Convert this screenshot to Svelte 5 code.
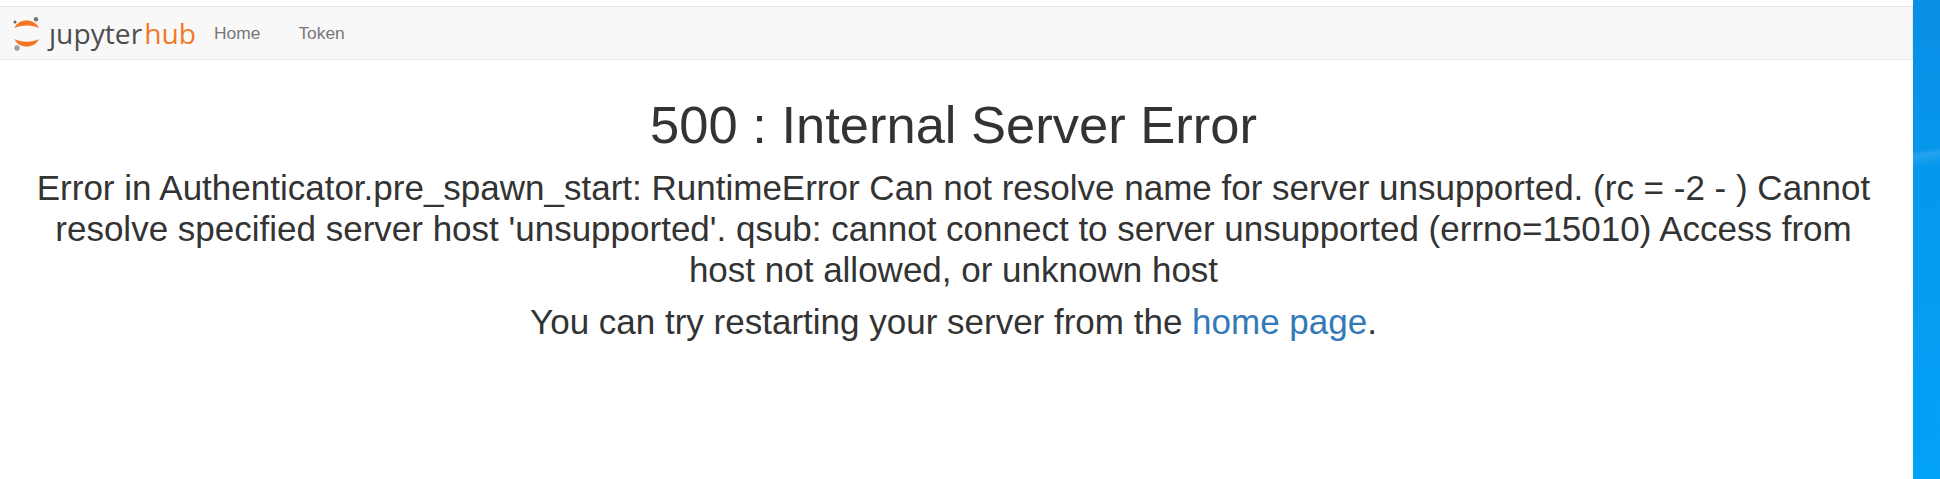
<script>
  let message = "Error in Authenticator.pre_spawn_start: RuntimeError Can not resolve name for server unsupported. (rc = -2 - ) Cannot resolve specified server host 'unsupported'. qsub: cannot connect to server unsupported (errno=15010) Access from host not allowed, or unknown host"
</script>

<div class="screen">
  <div class="page">
    <nav class="navbar">
      <a class="brand" href="#home">
        <svg class="logo" viewBox="0 0 28 36" width="28" height="36">
          <path d="M1.5 13 C5 3 22 3 26 13 C20 9.5 8 9.5 1.5 13 Z" fill="#f37726" />
          <path d="M1.5 24 C5 34 22 34 26 24 C20 27.5 8 27.5 1.5 24 Z" fill="#f37726" />
          <circle cx="23" cy="4.2" r="2.2" fill="#767677" />
          <circle cx="2" cy="7" r="1.5" fill="#616262" />
          <circle cx="4" cy="33" r="2.7" fill="#9e9e9e" />
        </svg>
        <span class="word">ȷupyter<span class="hub">hub</span></span>
      </a>
      <a class="link" href="#home">Home</a>
      <a class="link" href="#token">Token</a>
    </nav>

    <main class="error">
      <h1>500 : Internal Server Error</h1>
      <p>{message}</p>
      <p>You can try restarting your server from the <a href="#home">home page</a>.</p>
    </main>
  </div>
  <div class="desktop"></div>
</div>

<style>
  :global(body) {
    margin: 0;
    background: #fff;
  }

  .screen {
    display: flex;
    height: 479px;
    overflow: hidden;
    font-family: "Liberation Sans", Arial, sans-serif;
  }

  .page {
    flex: 1;
    min-width: 0;
    padding-top: 6px;
  }

  .desktop {
    width: 27px;
    background:
      linear-gradient(172deg, transparent 150px, rgba(255, 255, 255, 0.12) 154px, transparent 166px),
      linear-gradient(180deg, #0a8fe6 0%, #0599ee 40%, #02a2f7 100%);
  }

  .navbar {
    display: flex;
    align-items: center;
    height: 52px;
    background: #f8f8f8;
    border-top: 1px solid #e4e4e4;
    border-bottom: 1px solid #e7e7e7;
    border-right: 1px solid #e7e7e7;
  }

  .brand {
    display: flex;
    align-items: center;
    gap: 8px;
    margin-left: 13px;
    margin-right: 18px;
    text-decoration: none;
  }

  .word {
    font-family: "Open Sans", sans-serif;
    font-size: 28.2px;
    color: #4e4e4e;
    line-height: 1;
  }

  .hub {
    margin-left: 2px;
    color: #f37726;
  }

  .link {
    font-size: 17.4px;
    color: #777;
    text-decoration: none;
    margin-right: 38px;
  }

  .error {
    text-align: center;
    color: #333;
    padding: 0 33px 0 27px;
    margin-top: 36px;
  }

  h1 {
    font-size: 52.5px;
    font-weight: 400;
    line-height: 1.1;
    margin: 0 0 13px;
  }

  p {
    font-size: 35px;
    line-height: 41px;
    margin: 0 0 11px;
  }

  p a {
    color: #337ab7;
    text-decoration: none;
  }
</style>
